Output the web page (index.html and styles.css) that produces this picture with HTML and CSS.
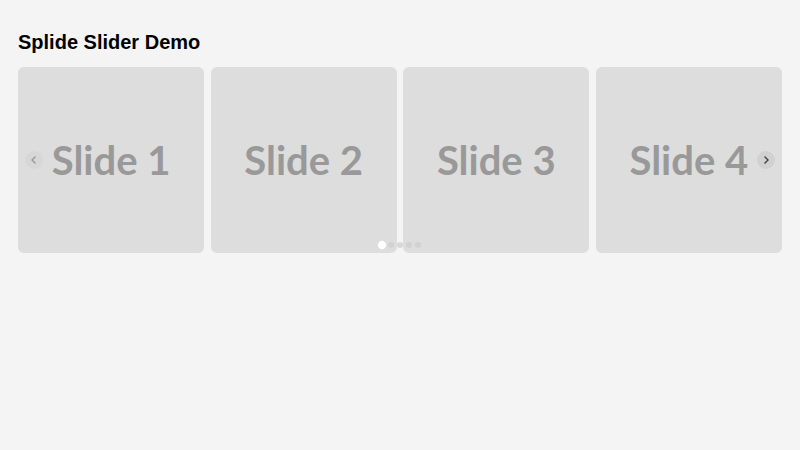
FILE: index.html
```html
<!DOCTYPE html>
<html lang="en">
<head>
<meta charset="utf-8">
<title>Splide Slider Demo</title>
<link rel="stylesheet" href="styles.css">
</head>
<body>
<main class="page">
  <h1 class="title">Splide Slider Demo</h1>
  <section class="slider" aria-label="Demo slides">
    <ul class="track">
      <li class="slide"><span class="slide-label">Slide 1</span></li>
      <li class="slide"><span class="slide-label">Slide 2</span></li>
      <li class="slide"><span class="slide-label">Slide 3</span></li>
      <li class="slide"><span class="slide-label">Slide 4</span></li>
    </ul>
    <button class="arrow arrow-prev" disabled aria-label="Previous slide">
      <svg viewBox="0 0 10 10" width="10" height="10"><path d="M6.5 1.5 L3 5 L6.5 8.5" fill="none" stroke="currentColor" stroke-width="1.4"/></svg>
    </button>
    <button class="arrow arrow-next" aria-label="Next slide">
      <svg viewBox="0 0 10 10" width="10" height="10"><path d="M3.5 1.5 L7 5 L3.5 8.5" fill="none" stroke="currentColor" stroke-width="1.4"/></svg>
    </button>
    <ul class="pagination">
      <li><button class="dot is-active" aria-label="Go to page 1"></button></li>
      <li><button class="dot" aria-label="Go to page 2"></button></li>
      <li><button class="dot" aria-label="Go to page 3"></button></li>
      <li><button class="dot" aria-label="Go to page 4"></button></li>
      <li><button class="dot" aria-label="Go to page 5"></button></li>
    </ul>
  </section>
</main>
</body>
</html>
```
FILE: styles.css
```css
html, body {
  margin: 0;
  padding: 0;
  background: #f4f4f4;
}

.page {
  padding: 0 18px;
  font-family: "Liberation Sans", Arial, sans-serif;
}

.title {
  margin: 31px 0 13px;
  font-size: 20px;
  line-height: 23px;
  font-weight: 700;
  color: #000;
}

.slider {
  position: relative;
}

.track {
  list-style: none;
  margin: 0;
  padding: 0;
  display: flex;
  gap: 6.4px;
}

.slide {
  flex: 1 1 0;
  aspect-ratio: 1 / 1;
  background: #dddddd;
  border-radius: 6px;
  display: flex;
  align-items: center;
  justify-content: center;
}

.slide-label {
  font-family: Lato, "Open Sans", sans-serif;
  font-weight: 700;
  font-size: 40px;
  color: #999999;
}

/* prev / next controls sit over the first and last slide */
.arrow {
  position: absolute;
  top: 50%;
  transform: translateY(-50%);
  width: 18px;
  height: 18px;
  padding: 0;
  border: 0;
  border-radius: 50%;
  background: #cccccc;
  color: #000;
  opacity: 0.7;
  display: flex;
  align-items: center;
  justify-content: center;
}

.arrow:disabled {
  opacity: 0.3;
}

.arrow-prev {
  left: 7px;
}

.arrow-next {
  right: 7px;
}

.pagination {
  position: absolute;
  left: 0;
  right: 0;
  bottom: 5px;
  height: 6px;
  margin: 0;
  padding: 0;
  list-style: none;
  display: flex;
  align-items: center;
  justify-content: center;
}

.pagination li {
  display: flex;
  margin: 0 1.5px;
}

.dot {
  width: 6px;
  height: 6px;
  padding: 0;
  border: 0;
  border-radius: 50%;
  background: #cccccc;
  opacity: 0.7;
}

.dot.is-active {
  background: #fff;
  opacity: 1;
  transform: scale(1.4);
}
```
